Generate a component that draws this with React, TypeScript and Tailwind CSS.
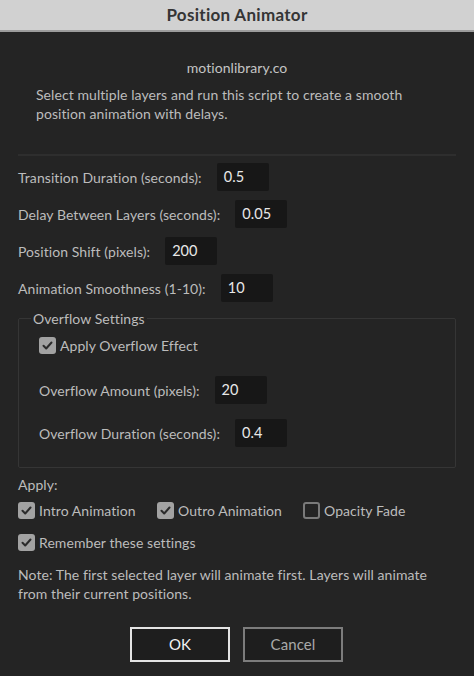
import React from "react";

const font = { fontFamily: "Lato, 'Open Sans', Arial, sans-serif", letterSpacing: "0.07px" };

function Field({ label, value, className = "" }: { label: string; value: string; className?: string }) {
  return (
    <div className={`flex items-center h-[28px] ${className}`}>
      <span className="text-[#bcbcbc] text-[14px] leading-[19px]">{label}</span>
      <div className="ml-[15px] w-[52px] h-[28px] bg-[#171717] rounded-[2px] flex items-center pl-[7px] text-[#e8e8e8] text-[14.5px]">
        {value}
      </div>
    </div>
  );
}

function Check({ checked, label, className = "" }: { checked: boolean; label: string; className?: string }) {
  return (
    <div className={`flex items-center h-[17px] ${className}`}>
      {checked ? (
        <div className="w-[17px] h-[17px] rounded-[3px] bg-[#a2a2a2] flex items-center justify-center shrink-0">
          <svg width="13" height="13" viewBox="0 0 13 13">
            <path d="M2.5 6.8 L5.2 9.5 L10.5 3.5" fill="none" stroke="#2b2b2b" strokeWidth="2" strokeLinecap="round" strokeLinejoin="round" />
          </svg>
        </div>
      ) : (
        <div className="w-[17px] h-[17px] rounded-[3px] border-2 border-[#7a7a7a] shrink-0" />
      )}
      <span className="ml-[4px] text-[#bcbcbc] text-[14px] leading-[19px] whitespace-nowrap">{label}</span>
    </div>
  );
}

export default function App() {
  return (
    <div className="w-[474px] h-[676px] bg-[#242424] flex flex-col overflow-hidden" style={font}>
      <div className="h-[32px] shrink-0 bg-[#d1d1d1] border-b-2 border-[#9c9c9c] flex items-center justify-center">
        <span className="text-[#353535] text-[17px] font-bold tracking-[0.3px]">Position Animator</span>
      </div>

      <div className="px-[18px] flex flex-col">
        <div className="mt-[26px] text-center text-[#c4c4c4] text-[14px] leading-[19px]">motionlibrary.co</div>
        <div className="mt-[8px] pl-[18px] text-[#bcbcbc] text-[14px] leading-[19px]">
          Select multiple layers and run this script to create a smooth
          <br />
          position animation with delays.
        </div>

        <div className="mt-[31px] h-[2px] bg-[#2e2e2e]" />

        <div className="mt-[7px] flex flex-col gap-[9px]">
          <Field label="Transition Duration (seconds):" value="0.5" />
          <Field label="Delay Between Layers (seconds):" value="0.05" />
          <Field label="Position Shift (pixels):" value="200" />
          <Field label="Animation Smoothness (1-10):" value="10" />
        </div>

        <fieldset className="mt-[7px] border border-[#353535] rounded-[2px] px-[20px] pb-[20px] pt-[9px]">
          <legend className="ml-[-8px] px-[2px] text-[#bcbcbc] text-[14px] leading-[19px]">Overflow Settings</legend>
          <Check checked label="Apply Overflow Effect" />
          <Field label="Overflow Amount (pixels):" value="20" className="mt-[22px]" />
          <Field label="Overflow Duration (seconds):" value="0.4" className="mt-[15px]" />
        </fieldset>

        <div className="mt-[7px] text-[#bcbcbc] text-[14px] leading-[19px]">Apply:</div>
        <div className="mt-[8px] flex">
          <Check checked label="Intro Animation" className="w-[139px]" />
          <Check checked label="Outro Animation" className="w-[146px]" />
          <Check checked={false} label="Opacity Fade" />
        </div>
        <Check checked label="Remember these settings" className="mt-[15px]" />

        <div className="mt-[14px] text-[#bcbcbc] text-[14px] leading-[19px]">
          Note: The first selected layer will animate first. Layers will animate
          <br />
          from their current positions.
        </div>

        <div className="mt-[24px] flex justify-center gap-[13px] pr-[1px]">
          <div className="w-[100px] h-[35px] border-2 border-[#e4e4e4] bg-[#1e1e1e] flex items-center justify-center text-[#f2f2f2] text-[15px]">
            OK
          </div>
          <div className="w-[100px] h-[35px] border-2 border-[#7c7c7c] bg-[#1e1e1e] flex items-center justify-center text-[#a9a9a9] text-[15px]">
            Cancel
          </div>
        </div>
      </div>
    </div>
  );
}
